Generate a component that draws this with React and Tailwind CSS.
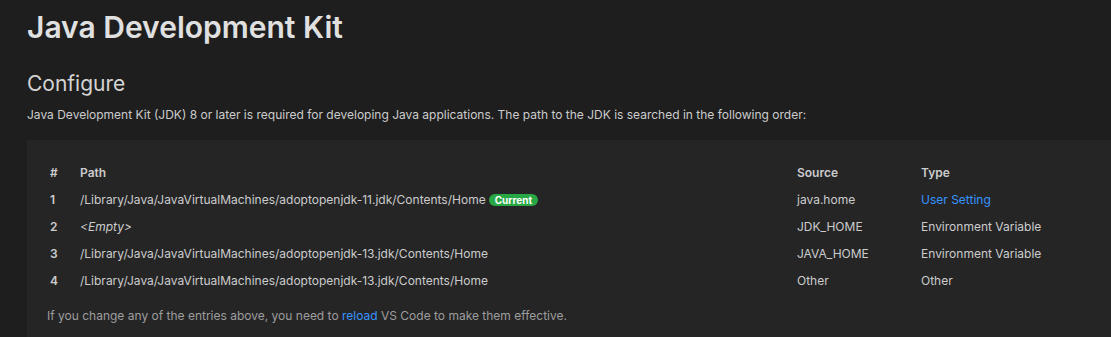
import React from "react";

const rows = [
  { n: "1", path: "/Library/Java/JavaVirtualMachines/adoptopenjdk-11.jdk/Contents/Home", current: true, source: "java.home", type: "User Setting", link: true },
  { n: "2", path: "<Empty>", empty: true, source: "JDK_HOME", type: "Environment Variable" },
  { n: "3", path: "/Library/Java/JavaVirtualMachines/adoptopenjdk-13.jdk/Contents/Home", source: "JAVA_HOME", type: "Environment Variable" },
  { n: "4", path: "/Library/Java/JavaVirtualMachines/adoptopenjdk-13.jdk/Contents/Home", source: "Other", type: "Other" },
];

export default function App() {
  return (
    <div className="w-[1111px] h-[337px] overflow-hidden bg-[#1e1e1e] text-[#cccccc] font-['Inter',sans-serif]">
      <div className="pl-[27px] pt-[8px]">
        <h1 className="text-[30px] font-semibold leading-[38px] text-[#e0e0e0]">Java Development Kit</h1>
        <h2 className="mt-[24px] text-[21px] leading-[28px] text-[#d4d4d4]">Configure</h2>
        <p className="mt-[8px] text-[12px] leading-[18px]">
          Java Development Kit (JDK) 8 or later is required for developing Java applications. The path to the JDK is searched in the following order:
        </p>
        <div className="mt-[16px] bg-[#252526] pl-[20px] pt-[19px] pb-[20px] w-[1100px]">
          <div className="grid grid-cols-[33px_717px_124px_1fr] text-[12px]">
            <div className="h-[27px] flex items-center pl-[3px] font-semibold">#</div>
            <div className="h-[27px] flex items-center font-semibold">Path</div>
            <div className="h-[27px] flex items-center font-semibold">Source</div>
            <div className="h-[27px] flex items-center font-semibold">Type</div>
            {rows.map((r) => (
              <React.Fragment key={r.n}>
                <div className="h-[27px] flex items-center pl-[3px] font-semibold">{r.n}</div>
                <div className="h-[27px] flex items-center gap-[3px]">
                  <span className={r.empty ? "italic" : ""}>{r.path}</span>
                  {r.current && (
                    <span className="bg-[#28a745] text-white text-[10px] font-bold leading-[12px] px-[6px] rounded-full">Current</span>
                  )}
                </div>
                <div className="h-[27px] flex items-center">{r.source}</div>
                <div className={`h-[27px] flex items-center ${r.link ? "text-[#3794ff]" : ""}`}>{r.type}</div>
              </React.Fragment>
            ))}
          </div>
          <p className="mt-[13px] text-[12px] leading-[18px] text-[#9d9d9d]">
            If you change any of the entries above, you need to <span className="text-[#3794ff]">reload</span> VS Code to make them effective.
          </p>
        </div>
      </div>
    </div>
  );
}
